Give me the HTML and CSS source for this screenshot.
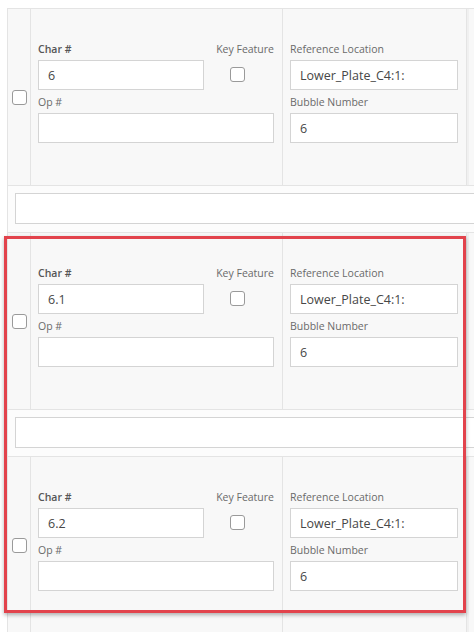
FILE: index.html
```html
<!DOCTYPE html>
<html lang="en">
<head>
<meta charset="utf-8">
<title>Characteristics</title>
<link rel="stylesheet" href="styles.css">
</head>
<body>
<div class="table">
  <div class="row">
    <div class="cell sel"><input type="checkbox" class="cb"></div>
    <div class="cell main">
      <div class="top">
        <div class="field char">
          <label class="lbl bold">Char #</label>
          <input class="inp" type="text" value="6">
        </div>
        <div class="key">
          <label class="lbl">Key Feature</label>
          <input type="checkbox" class="cb key-cb">
        </div>
      </div>
      <label class="lbl op">Op #</label>
      <input class="inp" type="text" value="">
    </div>
    <div class="cell side">
      <label class="lbl">Reference Location</label>
      <input class="inp" type="text" value="Lower_Plate_C4:1:">
      <label class="lbl op">Bubble Number</label>
      <input class="inp" type="text" value="6">
    </div>
    <div class="cell rest"></div>
  </div>
  <div class="gap"><input class="wide" type="text" value=""></div>

  <div class="row">
    <div class="cell sel"><input type="checkbox" class="cb"></div>
    <div class="cell main">
      <div class="top">
        <div class="field char">
          <label class="lbl bold">Char #</label>
          <input class="inp" type="text" value="6.1">
        </div>
        <div class="key">
          <label class="lbl">Key Feature</label>
          <input type="checkbox" class="cb key-cb">
        </div>
      </div>
      <label class="lbl op">Op #</label>
      <input class="inp" type="text" value="">
    </div>
    <div class="cell side">
      <label class="lbl">Reference Location</label>
      <input class="inp" type="text" value="Lower_Plate_C4:1:">
      <label class="lbl op">Bubble Number</label>
      <input class="inp" type="text" value="6">
    </div>
    <div class="cell rest"></div>
  </div>
  <div class="gap"><input class="wide" type="text" value=""></div>

  <div class="row">
    <div class="cell sel"><input type="checkbox" class="cb"></div>
    <div class="cell main">
      <div class="top">
        <div class="field char">
          <label class="lbl bold">Char #</label>
          <input class="inp" type="text" value="6.2">
        </div>
        <div class="key">
          <label class="lbl">Key Feature</label>
          <input type="checkbox" class="cb key-cb">
        </div>
      </div>
      <label class="lbl op">Op #</label>
      <input class="inp" type="text" value="">
    </div>
    <div class="cell side">
      <label class="lbl">Reference Location</label>
      <input class="inp" type="text" value="Lower_Plate_C4:1:">
      <label class="lbl op">Bubble Number</label>
      <input class="inp" type="text" value="6">
    </div>
    <div class="cell rest"></div>
  </div>
</div>
<div class="highlight"></div>
</body>
</html>
```
FILE: styles.css
```css
html, body {
  margin: 0;
  padding: 0;
  background: #ffffff;
  overflow: hidden;
  font-family: "Open Sans", "Noto Sans", sans-serif;
}
body {
  position: relative;
  width: 474px;
  height: 632px;
}
.table {
  margin-top: 8px;
  margin-left: 7px;
  border-top: 1px solid #e4e4e4;
  border-left: 1px solid #e4e4e4;
  overflow: hidden;
}
.row {
  display: grid;
  grid-template-columns: 23px 252px 184px 1fr;
  height: 176px;
  background: #f8f8f8;
  border-bottom: 1px solid #e4e4e4;
}
.cell {
  border-right: 1px solid #e4e4e4;
  box-sizing: border-box;
}
.rest {
  border-right: none;
  border-left: 2px solid #f0f0f0;
}
.sel {
  display: flex;
  align-items: center;
  justify-content: center;
}
.cb {
  appearance: none;
  -webkit-appearance: none;
  margin: 0;
  width: 15px;
  height: 15px;
  box-sizing: border-box;
  border: 1px solid #9a9a9a;
  border-radius: 3px;
  background: #ffffff;
}
.main {
  padding: 32px 8px 0 7px;
  display: flex;
  flex-direction: column;
}
.side {
  padding: 32px 8px 0 7px;
  display: flex;
  flex-direction: column;
}
.top {
  display: flex;
  justify-content: space-between;
}
.field {
  display: flex;
  flex-direction: column;
}
.char {
  width: 166px;
}
.key {
  display: flex;
  flex-direction: column;
  align-items: flex-end;
}
.key-cb {
  margin-top: 7px;
  margin-right: 29px;
}
.lbl {
  display: block;
  font-size: 10.5px;
  line-height: 16px;
  height: 16px;
  color: #6a6a6a;
  margin-bottom: 3px;
  white-space: nowrap;
}
.bold {
  font-weight: 600;
  color: #555555;
}
.op {
  margin-top: 4px;
}
.inp {
  display: block;
  box-sizing: border-box;
  width: 100%;
  height: 30px;
  margin: 0;
  border: 1px solid #d4d4d4;
  background: #ffffff;
  padding: 0 9px;
  font-family: "Open Sans", "Noto Sans", sans-serif;
  font-size: 12.5px;
  color: #474747;
  outline: none;
}
.gap {
  height: 47px;
  box-sizing: border-box;
  padding: 7px 0 0 7px;
  background: #fcfcfc;
  border-bottom: 1px solid #e4e4e4;
  overflow: hidden;
}
.wide {
  display: block;
  box-sizing: border-box;
  width: calc(100% + 12px);
  height: 31px;
  margin: 0;
  border: 1px solid #d4d4d4;
  background: #ffffff;
  outline: none;
}
.highlight {
  position: absolute;
  left: 4px;
  top: 236px;
  width: 462px;
  height: 377px;
  box-sizing: border-box;
  border: 3px solid #e2434c;
  box-shadow: 0 2px 4px rgba(0, 0, 0, 0.3);
  pointer-events: none;
}
```
